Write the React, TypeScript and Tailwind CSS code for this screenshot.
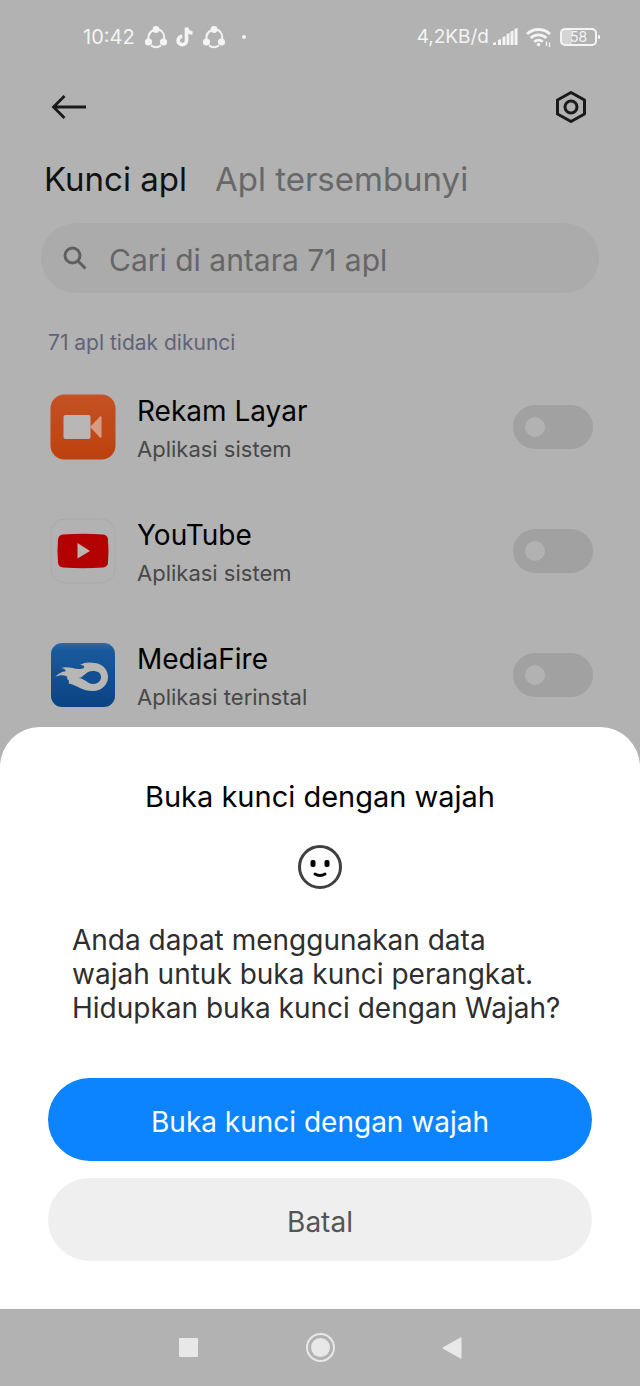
import { useState } from 'react';
import type { ReactNode } from 'react';

const ShareIcon = () => (
  <svg viewBox="0 0 24 24" className="w-6 h-6" fill="none" aria-hidden="true">
    <path d="M4.500 14a8.500 8.500 0 0 1 4.500-8.500M15 4.500a8.500 8.500 0 0 1 5 9.500M7 20.500a9 9 0 0 0 10 0" stroke="#f4f4f4" strokeWidth="2" />
    <circle cx="12" cy="4.500" r="3.400" fill="#f4f4f4" />
    <circle cx="4.500" cy="17" r="3.600" fill="#f4f4f4" />
    <circle cx="19.500" cy="17" r="3.600" fill="#f4f4f4" />
  </svg>
);

const TiktokIcon = () => (
  <svg viewBox="0 0 18 20" className="w-[18px] h-5" fill="none" aria-hidden="true">
    <path d="M10.500 .5v13a4.200 4.200 0 1 1-4.200-4.200M10.500 .5c.4 3.400 2.500 5.200 6 5.500" stroke="#f4f4f4" strokeWidth="3.700" />
  </svg>
);

const StatusBar = () => (
  <div className="flex items-center justify-between h-[74px] pl-[83px] pr-10 text-xl text-[#f4f4f4]">
    <div className="flex items-center">
      <span>10:42</span>
      <div className="flex items-center gap-2 ml-[9px]">
        <ShareIcon />
        <TiktokIcon />
        <ShareIcon />
      </div>
      <span className="w-1 h-1 ml-4 rounded-full bg-[#f4f4f4]" />
    </div>
    <div className="flex items-center">
      <span className="text-[19px]">4,2KB/d</span>
      <svg viewBox="0 0 25 18" className="w-[25px] h-[18px] ml-1" fill="#f4f4f4" aria-hidden="true">
        <path d="M0 17v-2l3-1v3zM5 17v-5l3-1v6zM9.500 17V9l3-1v9zM13.500 17V6l3-1v12zM17.500 17V3.500l3-1V17zM21.500 17V1l3-1v17z" />
      </svg>
      <svg viewBox="0 0 26 20" className="w-[26px] h-5 ml-2" fill="none" stroke="#f4f4f4" strokeWidth="2.800" aria-hidden="true">
        <path d="M1 7a17 17 0 0 1 23 0M4.600 11a11.500 11.500 0 0 1 15.800 0M8.300 14.800a6.500 6.500 0 0 1 8.400 0" />
        <circle cx="12.500" cy="17.500" r="1.800" fill="#f4f4f4" stroke="none" />
        <path d="M20.500 14.500v4.500M23.500 15.500v4.500" strokeWidth="1.300" />
      </svg>
      <div className="flex items-center ml-2">
        <div className="flex items-center justify-center w-[37px] h-[18px] rounded-[5px] border-2 border-[#f4f4f4] bg-linear-to-r from-[#d4d4d4] from-30% to-transparent to-30% text-sm leading-none">58</div>
        <span className="w-[2px] h-1 ml-px rounded-full bg-[#f4f4f4]" />
      </div>
    </div>
  </div>
);

const RecorderIcon = () => (
  <svg viewBox="0 0 66 66" className="w-[66px] h-[66px] shrink-0" aria-hidden="true">
    <defs>
      <linearGradient id="recorder" x1="0" y1="0" x2="0" y2="1">
        <stop offset="0" stopColor="#c55124" />
        <stop offset="1" stopColor="#bd410d" />
      </linearGradient>
    </defs>
    <rect width="65" height="65" x=".5" y=".5" rx="14" fill="url(#recorder)" />
    <path d="M40 33 50 22.500q1.500-1 1.500 1v19q0 2-1.500 1z" fill="#d89c83" />
    <rect x="13.500" y="21" width="27" height="24" rx="2" fill="#b9b7b6" />
  </svg>
);

const YoutubeIcon = () => (
  <svg viewBox="0 0 66 66" className="w-[66px] h-[66px] shrink-0" aria-hidden="true">
    <rect x="1" y="1" width="64" height="64" rx="14" fill="#b2b2b2" stroke="#a9a9a9" />
    <path d="M13 16.500q20-1.500 40 0 4.500.5 5 5 1 11.500 0 23-.5 4.500-5 5-20 1.500-40 0-4.500-.5-5-5-1-11.500 0-23 .5-4.500 5-5z" fill="#b30000" />
    <path d="M27.500 25v15.500L40 33z" fill="#b9b7b6" />
  </svg>
);

const MediafireIcon = () => (
  <svg viewBox="0 0 66 66" className="w-[66px] h-[66px] shrink-0" aria-hidden="true">
    <defs>
      <linearGradient id="mediafire" x1="0" y1="0" x2="0" y2="1">
        <stop offset="0" stopColor="#2f6ba5" />
        <stop offset=".1" stopColor="#195a9c" />
        <stop offset="1" stopColor="#0b4384" />
      </linearGradient>
    </defs>
    <rect x="1" y="1" width="64" height="64" rx="11" fill="url(#mediafire)" />
    <path d="M5 35c4-4 7-5 11-6-1-2-3-3-5-3 7-2 12 1 18 1 4 0 6-1 5-3-1-1-2-1-4-1 4-3 10-3 15-2 8 1 13 7 13 14 0 8-7 14-15 14-11 0-15-5-22-7-2 0-3-1-2-2 0-1 0-2-2-3 1-2 0-2-1-3-3-1-7-1-11 1z" fill="#b9b7b6" />
    <path d="M28 36c6 0 7-7 15-7 5 0 8 2 8 6s-3 7-8 7c-6 0-8-6-15-6z" fill="#124e92" />
  </svg>
);

interface AppRowProps {
  icon: ReactNode;
  name: string;
  kind: string;
}

const AppRow = ({ icon, name, kind }: AppRowProps) => (
  <li>
    <label className="flex items-center">
      {icon}
      <span className="flex flex-col flex-1 gap-1 mt-2 ml-[21px]">
        <span className="text-[28px] leading-8 text-black">{name}</span>
        <span className="text-[22px] leading-9 text-[#484848]">{kind}</span>
      </span>
      <span className="relative flex items-center w-20 h-11">
        <input type="checkbox" role="switch" className="peer appearance-none w-20 h-11 rounded-full bg-[#a1a1a1] checked:bg-[#085cb3]" />
        <span className="absolute left-3 w-5 h-5 rounded-full bg-[#b2b2b2] peer-checked:left-12 pointer-events-none" />
      </span>
    </label>
  </li>
);

const NavBar = () => (
  <nav className="flex items-center justify-center gap-[101px] h-[77px]">
    <button aria-label="Terbaru" className="w-8 h-8 flex items-center justify-center">
      <span className="w-[19px] h-[19px] rounded-[1px] bg-[#e8e8e8]" />
    </button>
    <button aria-label="Beranda" className="w-[29px] h-[29px] rounded-full border-2 border-[#e8e8e8] p-[3px]">
      <span className="block w-full h-full rounded-full bg-[#e8e8e8]" />
    </button>
    <button aria-label="Kembali" className="w-8 h-8 flex items-center justify-center">
      <svg viewBox="0 0 20 22" className="w-5 h-[22px]" fill="#e8e8e8" aria-hidden="true">
        <path d="M19.500 1v20q0 1-1 .5L1 11.700q-1-.7 0-1.400L18.500.5q1-.5 1 .5z" />
      </svg>
    </button>
  </nav>
);

export default function App() {
  const [query, setQuery] = useState('');

  return (
    <div className="flex flex-col min-h-screen bg-[#b2b2b2] font-['Inter',sans-serif]">
      <StatusBar />

      {/* App lock page, dimmed behind the sheet */}
      <main className="flex-1 pb-3">
        <header className="flex items-center justify-between h-[66px] pl-[51px] pr-[52px]">
          <button aria-label="Kembali">
            <svg viewBox="0 0 36 24" className="w-9 h-6" fill="none" stroke="#1a1a1a" strokeWidth="2.800" aria-hidden="true">
              <path d="M35 12H2.500M13.500 1 2.500 12l11 11" />
            </svg>
          </button>
          <button aria-label="Pengaturan">
            <svg viewBox="0 0 34 34" className="w-[34px] h-[34px]" fill="none" stroke="#1a1a1a" strokeWidth="3" strokeLinejoin="round" aria-hidden="true">
              <path d="M17 2.500 30.500 10v14L17 31.500 3.500 24V10z" />
              <circle cx="17" cy="17" r="6" />
            </svg>
          </button>
        </header>

        <div className="flex gap-7 h-[83px] pt-[17px] px-11 text-[33px] leading-[44px]">
          <button className="self-start text-[#111111]">Kunci apl</button>
          <button className="self-start text-[#686868]">Apl tersembunyi</button>
        </div>

        <label className="flex items-center h-[70px] mx-[41px] pl-[22px] pr-6 rounded-full bg-[#ababab]">
          <svg viewBox="0 0 24 24" className="w-6 h-6 shrink-0" fill="none" stroke="#5f5f5f" strokeWidth="3" aria-hidden="true">
            <circle cx="9.500" cy="9.500" r="7.500" />
            <path d="m15 15 7.500 7.500" />
          </svg>
          <input
            type="text"
            aria-label="Cari apl"
            value={query}
            onChange={(e) => setQuery(e.target.value)}
            placeholder="Cari di antara 71 apl"
            className="flex-1 min-w-0 ml-[22px] pt-1 bg-transparent text-[30px] leading-10 text-[#111111] placeholder:text-[#666666] outline-none"
          />
        </label>

        <h2 className="pt-[34px] pl-12 text-[21px] leading-8 text-[#626279]">71 apl tidak dikunci</h2>

        <ul className="flex flex-col gap-11 pt-7 pl-[50px] pr-[47px]">
          <AppRow icon={<RecorderIcon />} name="Rekam Layar" kind="Aplikasi sistem" />
          <AppRow icon={<YoutubeIcon />} name="YouTube" kind="Aplikasi sistem" />
          <AppRow icon={<MediafireIcon />} name="MediaFire" kind="Aplikasi terinstal" />
        </ul>
      </main>

      {/* Face unlock sheet */}
      <section role="dialog" aria-labelledby="sheet-title" className="flex flex-col items-center px-12 pt-[50px] pb-12 rounded-t-[40px] bg-white">
        <h1 id="sheet-title" className="text-[29px] leading-10 text-black">Buka kunci dengan wajah</h1>
        <svg viewBox="0 0 44 44" className="w-11 h-11 mt-7" fill="none" aria-hidden="true">
          <circle cx="22" cy="22" r="20.500" stroke="#404040" strokeWidth="3" />
          <rect x="12.500" y="15" width="5" height="7" rx="2" fill="#000" />
          <rect x="26.500" y="15" width="5" height="7" rx="2" fill="#000" />
          <path d="M17 29q5 3 10 0" stroke="#000" strokeWidth="3" strokeLinecap="round" />
        </svg>
        <p className="self-stretch mt-[34px] px-6 text-[28px] leading-[34px] text-[#2e2e2e]">
          Anda dapat menggunakan data<br />
          wajah untuk buka kunci perangkat.<br />
          Hidupkan buka kunci dengan Wajah?
        </p>
        <button className="w-full h-[83px] mt-[53px] pt-1 rounded-full bg-[#0c84ff] text-[28px] text-white">Buka kunci dengan wajah</button>
        <button className="w-full h-[83px] mt-[17px] pt-1 rounded-full bg-[#efefef] text-[28px] text-[#555555]">Batal</button>
      </section>

      <NavBar />
    </div>
  );
}
